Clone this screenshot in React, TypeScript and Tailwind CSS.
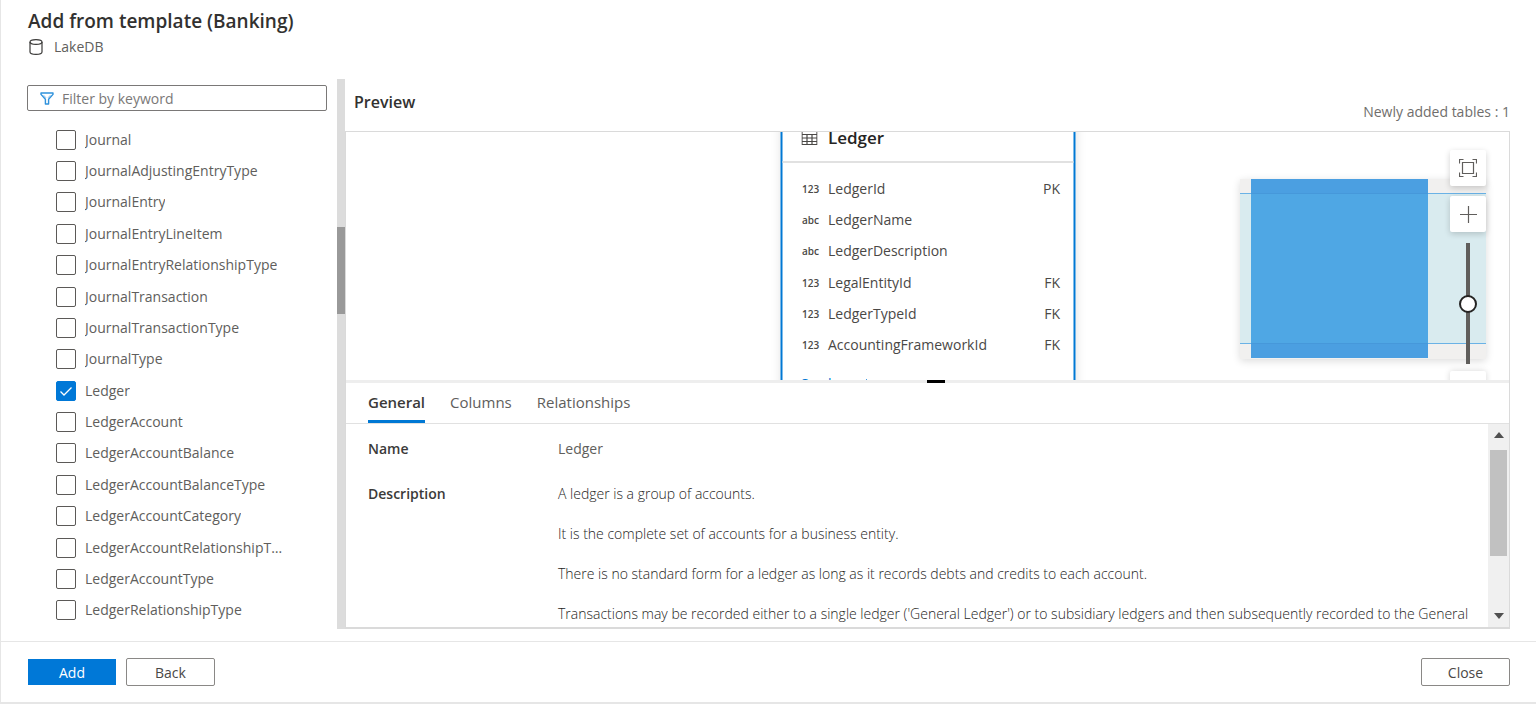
import { useState } from "react"

const tables = [
  "Journal",
  "JournalAdjustingEntryType",
  "JournalEntry",
  "JournalEntryLineItem",
  "JournalEntryRelationshipType",
  "JournalTransaction",
  "JournalTransactionType",
  "JournalType",
  "Ledger",
  "LedgerAccount",
  "LedgerAccountBalance",
  "LedgerAccountBalanceType",
  "LedgerAccountCategory",
  "LedgerAccountRelationshipType",
  "LedgerAccountType",
  "LedgerRelationshipType",
]

const columns = [
  { type: "123", name: "LedgerId", key: "PK" },
  { type: "abc", name: "LedgerName", key: "" },
  { type: "abc", name: "LedgerDescription", key: "" },
  { type: "123", name: "LegalEntityId", key: "FK" },
  { type: "123", name: "LedgerTypeId", key: "FK" },
  { type: "123", name: "AccountingFrameworkId", key: "FK" },
]

const description = [
  "A ledger is a group of accounts.",
  "It is the complete set of accounts for a business entity.",
  "There is no standard form for a ledger as long as it records debts and credits to each account.",
  "Transactions may be recorded either to a single ledger ('General Ledger') or to subsidiary ledgers and then subsequently recorded to the General Ledger.",
]

const tabs = ["General", "Columns", "Relationships"]

function TableList() {
  const [selected, setSelected] = useState<string[]>(["Ledger"])

  const toggle = (name: string) =>
    setSelected(selected.includes(name) ? selected.filter((s) => s !== name) : [...selected, name])

  return (
    <aside className="flex w-[300px] shrink-0 flex-col pt-[6px]">
      <label className="flex h-[26px] items-center rounded-[2px] border border-[#7a7877] pl-3">
        <svg width="14" height="13" viewBox="0 0 14 13" fill="none" stroke="#2f92dc" strokeWidth="1.4" strokeLinejoin="round">
          <path d="M1 1h12v1.400L8.600 7.200V12H5.400V7.200L1 2.400z" />
          <path d="M3.600 3.200L6 5.800M10.400 3.200L8 5.800" strokeWidth="0.6" />
        </svg>
        <input
          type="text"
          aria-label="Filter by keyword"
          placeholder="Filter by keyword"
          className="ml-2 min-w-0 flex-1 bg-transparent pt-[1px] text-sm outline-none placeholder:text-[#7a7877]"
        />
      </label>
      <ul className="mt-3 mb-[3px] flex min-h-0 flex-1 flex-col pt-[1px] pr-10 pl-[29px]">
        {tables.map((name) => (
          <li key={name} className="flex flex-1 items-center">
            <label className="flex min-w-0 items-center gap-[9px]">
              <span className="relative flex h-[20px] w-[20px] shrink-0">
                <input
                  type="checkbox"
                  checked={selected.includes(name)}
                  onChange={() => toggle(name)}
                  className="peer h-[20px] w-[20px] appearance-none rounded-[2px] border border-[#5b5957] bg-white checked:border-[#0078d7] checked:bg-[#0078d7]"
                />
                <svg className="pointer-events-none absolute inset-0 hidden peer-checked:block" width="20" height="20" viewBox="0 0 20 20" fill="none" stroke="#fff" strokeWidth="1.3">
                  <path d="M4.500 10.500l3.500 3.500 7.500-7.500" />
                </svg>
              </span>
              <span className="truncate text-sm">{name}</span>
            </label>
          </li>
        ))}
      </ul>
    </aside>
  )
}

function LedgerCard() {
  return (
    <div className="absolute -top-4 left-1/2 h-80 w-[295px] -translate-x-1/2 border-x-2 border-[#0078d4] bg-white shadow-[0_0_10px_rgba(0,0,0,0.12)]">
      <div className="flex h-[47px] items-center border-b-2 border-[#e1e1e1] pb-[2px] pl-[19px]">
        <svg width="16" height="14" viewBox="0 0 16 14" fill="none" stroke="#4a4846" strokeWidth="1.2">
          <path d="M0.500 0.500h15v13h-15zM0.500 3.500h15M0.500 7h15M0.500 10.500h15M5.500 3.500v10M10.500 3.500v10" />
        </svg>
        <h3 className="ml-[11px] text-[17px] font-semibold text-[#252423]">Ledger</h3>
      </div>
      <ul className="flex h-[198px] flex-col pt-[10px]">
        {columns.map((col) => (
          <li key={col.name} className="flex flex-1 items-center pr-[13px] pl-5 text-sm text-[#4a4846]">
            <span className="w-[26px] text-[10px] font-semibold">{col.type}</span>
            <span className="flex-1">{col.name}</span>
            <span>{col.key}</span>
          </li>
        ))}
      </ul>
      <button className="ml-[19px] flex h-[46px] items-center gap-2 text-sm text-[#0078d4]">
        See less
        <svg width="12" height="12" viewBox="0 0 12 12" fill="none" stroke="#0078d4">
          <path d="M1 6.500l5-5 5 5" />
        </svg>
      </button>
    </div>
  )
}

function MiniMap() {
  return (
    <div className="absolute top-[47px] right-[23px] h-[180px] w-[246px] bg-[#f1f0ef] shadow-[0_2px_8px_rgba(0,0,0,0.14)]">
      <svg width="246" height="180">
        <path fill="#d9ebef" d="M0 15h246v149H0z" />
        <path stroke="#6ab2e6" d="M0 14.500h246M0 164.500h246" />
        <path fill="#4b9fe1" d="M11 0h177v179H11z" />
        <path fill="#4fa7e4" d="M11 15h177v149H11z" />
        <path stroke="#4698da" d="M11 14.500h177M11 164.500h177" />
      </svg>
    </div>
  )
}

function ZoomControls() {
  return (
    <div className="absolute top-[18px] right-[23px] flex w-[36px] flex-col items-center">
      <button aria-label="Fit to screen" className="flex h-[36px] w-[36px] items-center justify-center rounded-[2px] bg-white shadow-[0_2px_6px_rgba(0,0,0,0.18)]">
        <svg width="18" height="18" viewBox="0 0 18 18" fill="none" stroke="#605e5c" strokeWidth="1.2">
          <path d="M0.500 4.500v-4h4M13.500 0.500h4v4M17.500 13.500v4h-4M4.500 17.500h-4v-4M3.500 3.500h11v11h-11z" />
        </svg>
      </button>
      <button aria-label="Zoom in" className="mt-[10px] flex h-[36px] w-[36px] items-center justify-center rounded-[2px] bg-white shadow-[0_2px_6px_rgba(0,0,0,0.18)]">
        <svg width="17" height="17" viewBox="0 0 17 17" stroke="#605e5c" strokeWidth="1.2">
          <path d="M8.500 0v17M0 8.500h17" />
        </svg>
      </button>
      <input
        type="range"
        aria-label="Zoom"
        defaultValue={50}
        className="mt-[11px] h-[121px] w-[18px] appearance-none bg-[linear-gradient(#605e5c,#605e5c)] bg-[length:4px_100%] bg-center bg-no-repeat [writing-mode:vertical-lr] [direction:rtl] [&::-webkit-slider-thumb]:h-[18px] [&::-webkit-slider-thumb]:w-[18px] [&::-webkit-slider-thumb]:appearance-none [&::-webkit-slider-thumb]:rounded-full [&::-webkit-slider-thumb]:border-2 [&::-webkit-slider-thumb]:border-[#252423] [&::-webkit-slider-thumb]:bg-white"
      />
      <button aria-label="Zoom out" className="mt-[7px] h-[36px] w-[36px] rounded-[2px] bg-white shadow-[0_0_6px_rgba(0,0,0,0.16)]" />
    </div>
  )
}

function Details() {
  const [activeTab, setActiveTab] = useState("General")

  return (
    <>
      <div role="tablist" className="flex h-[41px] shrink-0 gap-[25px] border-b border-[#e1e1e1] pl-[22px]">
        {tabs.map((tab) => (
          <button
            key={tab}
            role="tab"
            aria-selected={activeTab === tab}
            onClick={() => setActiveTab(tab)}
            className={`border-b-3 pt-[2px] text-[15px] ${activeTab === tab ? "border-[#0078d4] font-semibold text-[#3b3a39]" : "border-transparent"}`}
          >
            {tab}
          </button>
        ))}
      </div>
      <div className="flex min-h-0 flex-1">
        <dl className="grid flex-1 grid-cols-[190px_1fr] content-start gap-y-[25px] overflow-hidden pt-[15px] pl-[22px] text-sm">
          <dt className="font-semibold text-[#3b3a39]">Name</dt>
          <dd>Ledger</dd>
          <dt className="font-semibold text-[#3b3a39]">Description</dt>
          <dd className="flex flex-col gap-5 font-light text-[#252423]">
            {description.map((line) => (
              <p key={line}>{line}</p>
            ))}
          </dd>
        </dl>
        <div className="flex w-[21px] shrink-0 flex-col items-center bg-[#f0f0f0] py-2">
          <svg width="10" height="6" viewBox="0 0 10 6" fill="#505050">
            <path d="M5 0l5 6H0z" />
          </svg>
          <div className="mt-3 h-[106px] w-[17px] bg-[#c1c1c1]" />
          <svg className="mt-auto" width="10" height="6" viewBox="0 0 10 6" fill="#505050">
            <path d="M0 0h10L5 6z" />
          </svg>
        </div>
      </div>
    </>
  )
}

export default function App() {
  return (
    <div className="flex h-screen flex-col border-l border-[#e6e6e6] bg-white font-['Open_Sans',sans-serif] text-[#605e5c]">
      <header className="h-[79px] shrink-0 pt-[9px] pl-[27px]">
        <h1 className="text-[19px] leading-6 font-semibold text-[#323130]">Add from template (Banking)</h1>
        <div className="mt-1 flex items-center gap-[11px]">
          <svg className="ml-[1px]" width="14" height="16" viewBox="0 0 14 16" fill="none" stroke="#3b3a39" strokeWidth="1.2">
            <ellipse cx="7" cy="3" rx="6" ry="2.400" />
            <path d="M1 3v10c0 1.300 2.700 2.400 6 2.400s6-1.100 6-2.400V3" />
          </svg>
          <span className="text-sm">LakeDB</span>
        </div>
      </header>

      <main className="flex min-h-0 flex-1 pr-[26px] pl-[26px]">
        <TableList />
        <div className="ml-[10px] w-2 shrink-0 bg-[#dcdcdc] pt-[148px]">
          <div className="h-[87px] bg-[#999]" />
        </div>
        <section className="flex min-w-0 flex-1 flex-col">
          <div className="flex h-[52px] shrink-0 justify-between pl-[9px]">
            <h2 className="pt-[11px] text-base font-semibold text-[#323130]">Preview</h2>
            <span className="pt-[23px] text-sm text-[#706e6c]">Newly added tables : 1</span>
          </div>
          <div className="flex min-h-0 flex-1 flex-col border border-b-2 border-[#dadada]">
            <div className="relative min-h-0 flex-1 overflow-hidden">
              <LedgerCard />
              <MiniMap />
              <ZoomControls />
            </div>
            <div className="flex h-[3px] shrink-0 justify-center bg-[#eeeeee] pl-4">
              <div className="w-[18px] bg-black" />
            </div>
            <div className="flex h-[244px] shrink-0 flex-col">
              <Details />
            </div>
          </div>
        </section>
      </main>

      <footer className="mt-3 flex h-[63px] shrink-0 items-center border-t border-b-2 border-[#e6e6e6] pr-[26px] pl-[27px] text-sm text-[#4a4846]">
        <button className="h-[26px] w-[88px] bg-[#0078d7] pt-[1px] text-white">Add</button>
        <button className="ml-[10px] h-[28px] w-[89px] rounded-[2px] border border-[#8a8886] pt-[1px]">Back</button>
        <button className="ml-auto h-[28px] w-[89px] rounded-[2px] border border-[#8a8886] pt-[1px]">Close</button>
      </footer>
    </div>
  )
}
